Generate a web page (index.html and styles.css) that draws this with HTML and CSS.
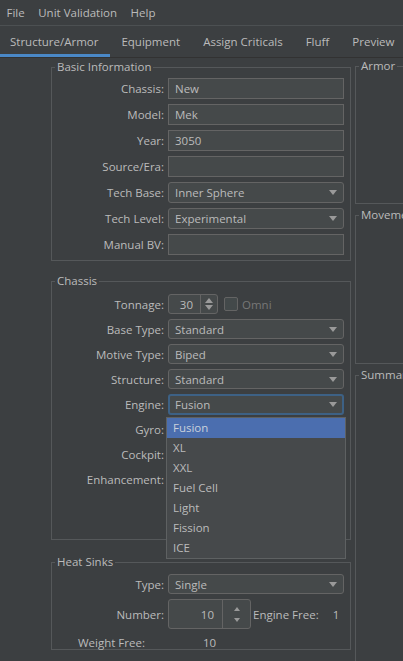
FILE: index.html
```html
<!DOCTYPE html>
<html>
<head>
<meta charset="utf-8">
<title>Mek Lab</title>
<link rel="stylesheet" href="styles.css">
</head>
<body>
<div class="app">
  <div class="menubar">
    <span class="menu">File</span>
    <span class="menu">Unit Validation</span>
    <span class="menu">Help</span>
  </div>
  <div class="tabs">
    <span class="tab active">Structure/Armor</span>
    <span class="tab">Equipment</span>
    <span class="tab">Assign Criticals</span>
    <span class="tab">Fluff</span>
    <span class="tab">Preview</span>
  </div>
  <div class="main">
    <div class="leftcol">
      <fieldset class="group basic">
        <legend>Basic Information</legend>
        <div class="form form-basic">
          <label class="lbl">Chassis:</label><div class="text">New</div>
          <label class="lbl">Model:</label><div class="text">Mek</div>
          <label class="lbl">Year:</label><div class="text">3050</div>
          <label class="lbl">Source/Era:</label><div class="text"></div>
          <label class="lbl">Tech Base:</label><div class="combo"><span class="val">Inner Sphere</span><span class="arrow"></span></div>
          <label class="lbl">Tech Level:</label><div class="combo"><span class="val">Experimental</span><span class="arrow"></span></div>
          <label class="lbl">Manual BV:</label><div class="text"></div>
        </div>
      </fieldset>

      <fieldset class="group chassis">
        <legend>Chassis</legend>
        <div class="form form-chassis">
          <label class="lbl">Tonnage:</label>
          <div class="inline">
            <div class="spinner spin-ton">
              <span class="spin-val">30</span>
              <span class="spin-btns sort"><span class="up"></span><span class="down"></span></span>
            </div>
            <span class="check"></span>
            <span class="disabled">Omni</span>
          </div>
          <label class="lbl">Base Type:</label><div class="combo"><span class="val">Standard</span><span class="arrow"></span></div>
          <label class="lbl">Motive Type:</label><div class="combo"><span class="val">Biped</span><span class="arrow"></span></div>
          <label class="lbl">Structure:</label><div class="combo"><span class="val">Standard</span><span class="arrow"></span></div>
          <label class="lbl">Engine:</label>
          <div class="combo-wrap">
            <div class="combo focused"><span class="val">Fusion</span><span class="arrow"></span></div>
            <ul class="popup">
              <li class="sel">Fusion</li>
              <li>XL</li>
              <li>XXL</li>
              <li>Fuel Cell</li>
              <li>Light</li>
              <li>Fission</li>
              <li>ICE</li>
            </ul>
          </div>
          <label class="lbl">Gyro:</label><div class="combo"></div>
          <label class="lbl">Cockpit:</label><div class="combo"></div>
          <label class="lbl">Enhancement:</label><div class="combo"></div>
        </div>
      </fieldset>

      <fieldset class="group heat">
        <legend>Heat Sinks</legend>
        <div class="form form-heat">
          <label class="lbl">Type:</label><div class="combo"><span class="val">Single</span><span class="arrow"></span></div>
          <label class="lbl">Number:</label>
          <div class="inline">
            <div class="spinner spin-num">
              <span class="spin-val">10</span>
              <span class="spin-btns split"><span class="up"></span><span class="down"></span></span>
            </div>
            <span class="efree">Engine Free:</span>
            <span class="efree-val">1</span>
          </div>
        </div>
        <div class="wfree">
          <span class="wfree-lbl">Weight Free:</span>
          <span class="wfree-val">10</span>
        </div>
      </fieldset>
    </div>

    <div class="rightcol">
      <fieldset class="group armor"><legend>Armor</legend></fieldset>
      <fieldset class="group movement"><legend>Movement</legend></fieldset>
      <fieldset class="group summary"><legend>Summary</legend></fieldset>
    </div>
  </div>
</div>
</body>
</html>
```

FILE: styles.css
```css
* { box-sizing: border-box; }
html, body { margin: 0; padding: 0; }
body {
  background: #3c3f41;
  color: #bbbbbb;
  font-family: "Open Sans", "Noto Sans", sans-serif;
  font-size: 11.5px;
  width: 403px;
  height: 661px;
  overflow: hidden;
}
.app { width: 403px; height: 661px; overflow: hidden; }

/* menu bar */
.menubar {
  height: 26px;
  display: flex;
  align-items: center;
  border-bottom: 1px solid #4c5052;
  padding-left: 0;
}
.menu { padding: 0 6.5px; line-height: 25px; }
.menu + .menu { margin-left: 0.5px; }

/* tabs */
.tabs {
  height: 32px;
  display: flex;
  border-bottom: 1px solid #323232;
  white-space: nowrap;
}
.tab {
  padding: 0 11.5px;
  line-height: 31px;
  height: 31px;
}
.tab.active {
  padding-left: 10px;
  box-shadow: inset 0 -3px 0 #4a88c7;
}

/* main */
.main {
  display: flex;
  gap: 4px;
  padding-left: 51px;
}
.leftcol { width: 300px; flex: none; }
.rightcol { width: 300px; flex: none; overflow: hidden; }

.group {
  margin: 0;
  border: 1px solid #55585a;
  padding: 0 6px 0 0;
  min-width: 0;
  width: 300px;
}
.group legend {
  padding: 0 2px;
  margin-left: 3px;
  line-height: 16px;
  height: 16px;
  white-space: nowrap;
}

.basic { margin-top: 1px; padding-top: 3px; padding-bottom: 5px; }
.chassis { margin-top: 12px; padding-top: 5px; height: 267px; }
.heat { margin-top: 14px; padding-top: 4px; height: 96px; }

.form {
  display: grid;
  grid-template-columns: 112px 176px;
  column-gap: 4px;
  row-gap: 5px;
}
.form-basic { grid-auto-rows: 21px; }
.form-chassis { grid-auto-rows: 20px; }
.form-heat { grid-template-rows: 20px 30px; }

.lbl {
  text-align: right;
  display: flex;
  align-items: center;
  justify-content: flex-end;
  white-space: nowrap;
}

.text {
  background: #45494a;
  border: 1px solid #646464;
  padding: 0 6px;
  display: flex;
  align-items: center;
}
.combo {
  background: #45494a;
  border: 1px solid #646464;
  border-radius: 3px;
  padding: 0 6px;
  display: flex;
  align-items: center;
  justify-content: space-between;
}
.combo .val { flex: 1; }
.arrow {
  width: 0; height: 0;
  border-top: 5px solid #9a9a9a;
  border-left: 4.5px solid transparent;
  border-right: 4.5px solid transparent;
}
.combo.focused {
  border: 2px solid #3d6185;
  padding: 0 5px;
  height: 21px;
}

.combo-wrap { position: relative; }
.popup {
  position: absolute;
  z-index: 10;
  left: -2px;
  top: 23px;
  width: 180px;
  margin: 0;
  padding: 0;
  list-style: none;
  background: #46494b;
  border: 1px solid #5e6162;
}
.popup li {
  height: 20px;
  line-height: 20px;
  padding-left: 6px;
}
.popup li.sel { background: #4b6eaf; color: #c9d1dc; }

/* inline rows */
.inline { display: flex; align-items: center; }

.spinner {
  display: flex;
  border: 1px solid #646464;
  border-radius: 3px;
  background: #45494a;
  height: 100%;
}
.spin-val {
  display: flex;
  align-items: center;
  justify-content: flex-end;
  border-right: 1px solid #646464;
}
.spin-ton { width: 50px; }
.spin-ton .spin-val { width: 32px; padding-right: 7px; }
.spin-num { width: 83px; }
.spin-num .spin-val { width: 54px; padding-right: 8px; }

.spin-btns {
  flex: 1;
  display: flex;
  flex-direction: column;
  align-items: center;
  justify-content: center;
}
.up {
  width: 0; height: 0;
  border-bottom: 5px solid #9a9a9a;
  border-left: 4px solid transparent;
  border-right: 4px solid transparent;
}
.down {
  width: 0; height: 0;
  border-top: 5px solid #9a9a9a;
  border-left: 4px solid transparent;
  border-right: 4px solid transparent;
}
.sort .up { margin-bottom: 2px; }
.split .up { margin-bottom: 7px; }
.split .up, .split .down { border-left-width: 3.5px; border-right-width: 3.5px; border-bottom-width: 4px; border-top-width: 4px; }

.check {
  width: 14px; height: 14px;
  border: 1px solid #646464;
  border-radius: 2px;
  background: #43494a;
  margin-left: 6px;
}
.disabled { color: #777777; margin-left: 4px; }

.efree { margin-left: 2px; }
.efree-val { margin-left: 14px; }

.wfree {
  display: flex;
  align-items: center;
  height: 14px;
  margin-top: 6px;
  padding-left: 26px;
}
.wfree-lbl { width: 125px; }

/* right column */
.armor { margin-top: 0; height: 146px; }
.movement { margin-top: 3px; height: 157px; }
.summary { margin-top: 3px; height: 400px; }
```
